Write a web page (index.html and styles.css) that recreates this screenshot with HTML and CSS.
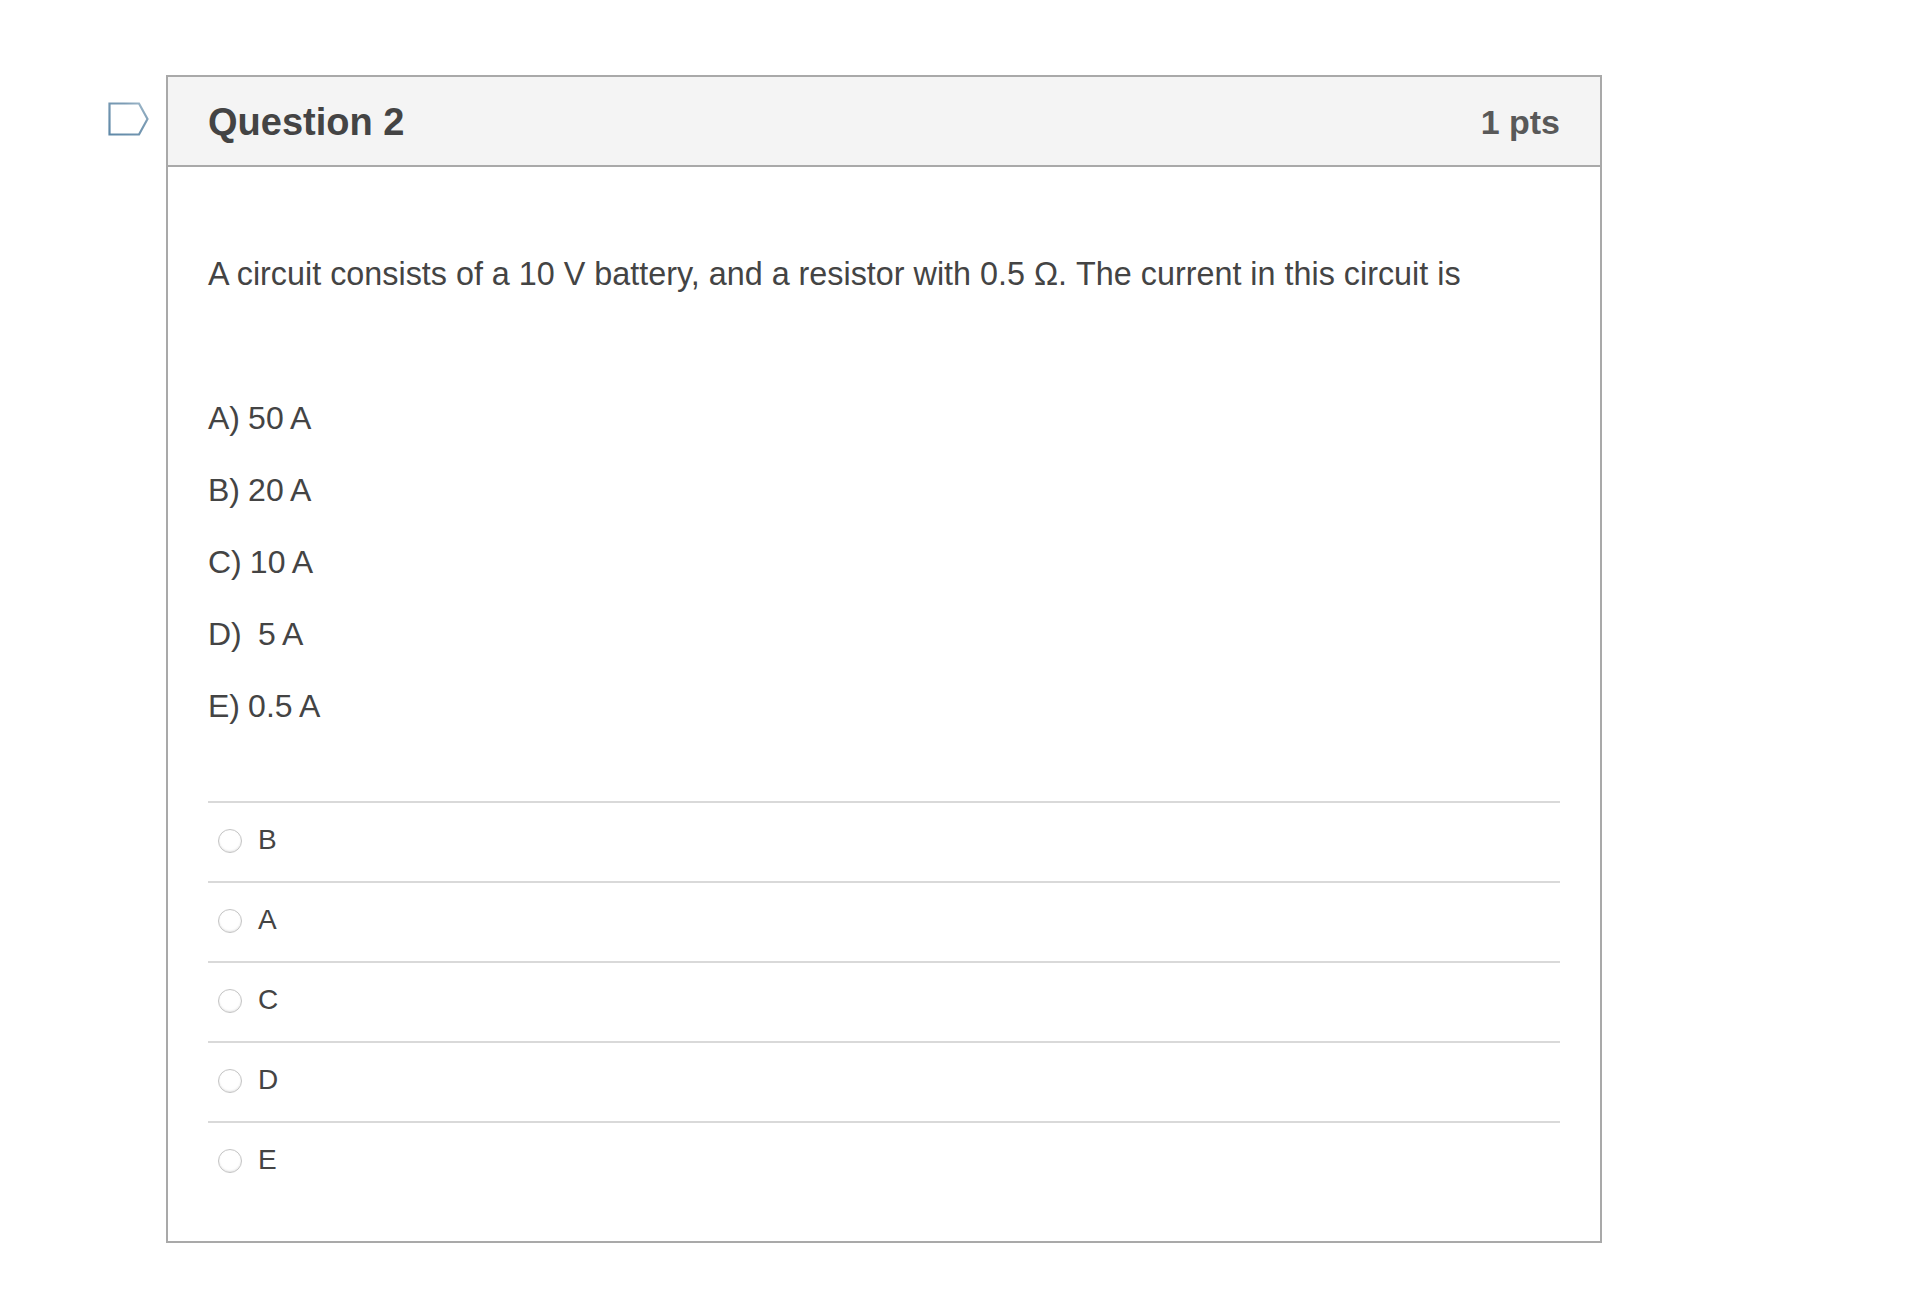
FILE: index.html
```html
<!DOCTYPE html>
<html lang="en">
<head>
<meta charset="utf-8">
<title>Question 2</title>
<link rel="stylesheet" href="styles.css">
</head>
<body>
<div class="page">
  <svg class="flag" width="42" height="36" viewBox="0 0 42 36" aria-hidden="true">
    <defs>
      <linearGradient id="flagStroke" x1="0" y1="1" x2="1" y2="0">
        <stop offset="0" stop-color="#5f89a8"/>
        <stop offset="0.7" stop-color="#7d9db5"/>
        <stop offset="1" stop-color="#a8c0d0"/>
      </linearGradient>
    </defs>
    <path d="M1.5 2.5H31L39.5 18L31 33.5H1.5Z" fill="#fff" stroke="url(#flagStroke)" stroke-width="2.2"/>
  </svg>
  <div class="card">
    <div class="head">
      <h2 class="title">Question 2</h2>
      <span class="pts">1 pts</span>
    </div>
    <div class="body">
      <p class="prompt">A circuit consists of a 10 V battery, and a resistor with 0.5 Ω. The current in this circuit is</p>
      <div class="choices">
        <p class="choice">A) 50 A</p>
        <p class="choice">B) 20 A</p>
        <p class="choice">C) 10 A</p>
        <p class="choice">D)&nbsp; 5 A</p>
        <p class="choice">E) 0.5 A</p>
      </div>
      <div class="answers">
        <div class="answer"><span class="radio"></span><span class="label">B</span></div>
        <div class="answer"><span class="radio"></span><span class="label">A</span></div>
        <div class="answer"><span class="radio"></span><span class="label">C</span></div>
        <div class="answer"><span class="radio"></span><span class="label">D</span></div>
        <div class="answer"><span class="radio"></span><span class="label">E</span></div>
      </div>
    </div>
  </div>
</div>
</body>
</html>
```
FILE: styles.css
```css
html, body { margin: 0; padding: 0; background: #fff; }
body { font-family: "Liberation Sans", Arial, sans-serif; color: #444; }
.page {
  display: flex;
  align-items: flex-start;
  width: 1926px;
  height: 1292px;
  padding: 75px 0 0 108px;
  box-sizing: border-box;
}
.flag { flex: none; margin: 26px 16px 0 0; }
.card {
  width: 1436px;
  height: 1168px;
  box-sizing: border-box;
  border: 2px solid #a9a9a9;
}
.head {
  display: flex;
  align-items: center;
  justify-content: space-between;
  height: 90px;
  box-sizing: border-box;
  padding: 2px 40px 0;
  background: #f4f4f4;
  border-bottom: 2px solid #a9a9a9;
}
.title { margin: 0; font-size: 38px; font-weight: 700; color: #444; }
.pts { font-size: 34px; font-weight: 700; color: #595959; }
.body { padding: 86px 40px 0; }
.prompt { margin: 0 0 102px; font-size: 32.35px; line-height: 42px; }
.choices { display: flex; flex-direction: column; gap: 30px; }
.choice { margin: 0; font-size: 32px; line-height: 42px; word-spacing: -0.8px; }
.answers { margin-top: 74px; }
.answer {
  display: flex;
  align-items: center;
  height: 80px;
  box-sizing: border-box;
  border-top: 2px solid #d9d9d9;
  padding: 0 0 0 10px;
}
.radio {
  flex: none;
  width: 24px;
  height: 24px;
  margin-bottom: 2px;
  box-sizing: border-box;
  border: 1.5px solid #c4c4c4;
  border-radius: 50%;
  background: #fff;
  box-shadow: inset 0 -1px 2px #e4e4e4;
}
.label { margin-left: 16px; font-size: 28px; line-height: 36px; position: relative; top: -2px; }
```
